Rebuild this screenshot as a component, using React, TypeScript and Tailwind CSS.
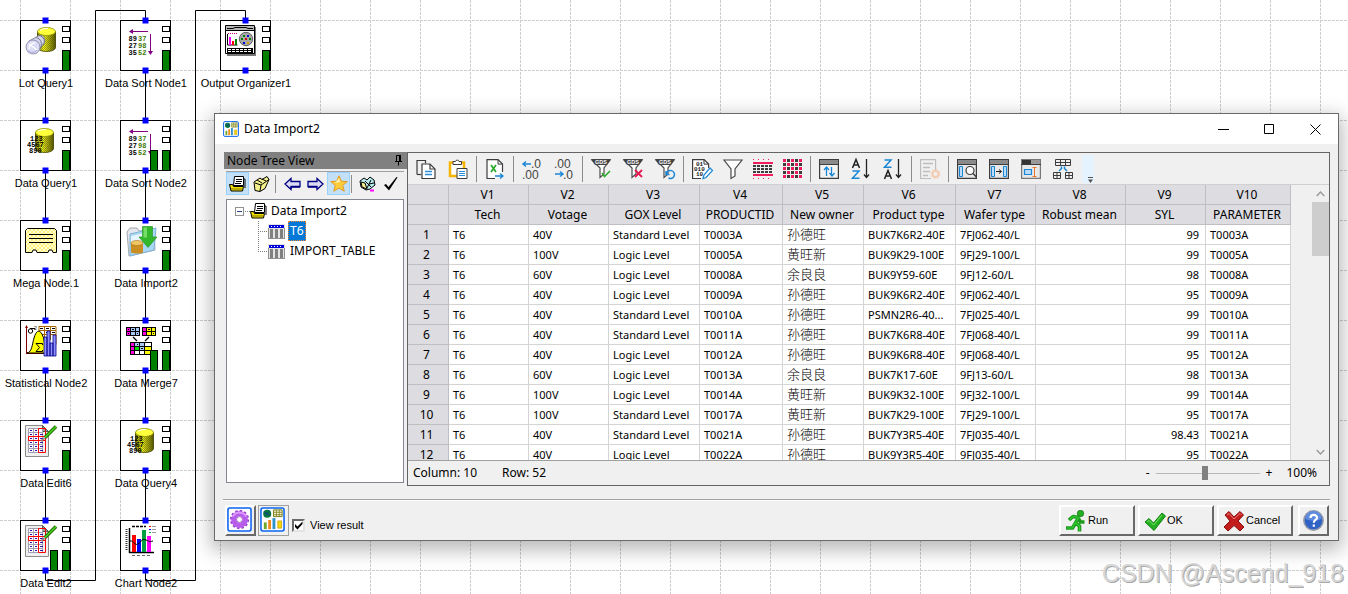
import React, { useState } from "react";

type ArtName =
  | "lot" | "query" | "mega" | "stat" | "edit" | "sort" | "import" | "merge" | "chart" | "output";

type FlowNode = { label: string; art: ArtName; col: number; row: number; bars: number };

const NODES: FlowNode[] = [
  { label: "Lot Query1", art: "lot", col: 0, row: 0, bars: 1 },
  { label: "Data Query1", art: "query", col: 0, row: 1, bars: 1 },
  { label: "Mega Node.1", art: "mega", col: 0, row: 2, bars: 1 },
  { label: "Statistical Node2", art: "stat", col: 0, row: 3, bars: 1 },
  { label: "Data Edit6", art: "edit", col: 0, row: 4, bars: 1 },
  { label: "Data Edit2", art: "edit", col: 0, row: 5, bars: 2 },
  { label: "Data Sort Node1", art: "sort", col: 1, row: 0, bars: 1 },
  { label: "Data Sort Node2", art: "sort", col: 1, row: 1, bars: 2 },
  { label: "Data Import2", art: "import", col: 1, row: 2, bars: 1 },
  { label: "Data Merge7", art: "merge", col: 1, row: 3, bars: 2 },
  { label: "Data Query4", art: "query", col: 1, row: 4, bars: 1 },
  { label: "Chart Node2", art: "chart", col: 1, row: 5, bars: 1 },
  { label: "Output Organizer1", art: "output", col: 2, row: 0, bars: 1 },
];

const COLUMNS = [
  { id: "V1", name: "Tech", w: "w-[80px]" },
  { id: "V2", name: "Votage", w: "w-[80px]" },
  { id: "V3", name: "GOX Level", w: "w-[91px]" },
  { id: "V4", name: "PRODUCTID", w: "w-[83px]" },
  { id: "V5", name: "New owner", w: "w-[81px]" },
  { id: "V6", name: "Product type", w: "w-[92px]" },
  { id: "V7", name: "Wafer type", w: "w-[80px]" },
  { id: "V8", name: "Robust mean", w: "w-[90px]" },
  { id: "V9", name: "SYL", w: "w-[80px]" },
  { id: "V10", name: "PARAMETER", w: "w-[85px]" },
];

const ROWS: string[][] = [
  ["T6", "40V", "Standard Level", "T0003A", "孙德旺", "BUK7K6R2-40E", "7FJ062-40/L", "", "99", "T0003A"],
  ["T6", "100V", "Logic Level", "T0005A", "黄旺新", "BUK9K29-100E", "9FJ29-100/L", "", "99", "T0005A"],
  ["T6", "60V", "Logic Level", "T0008A", "余良良", "BUK9Y59-60E", "9FJ12-60/L", "", "98", "T0008A"],
  ["T6", "40V", "Logic Level", "T0009A", "孙德旺", "BUK9K6R2-40E", "9FJ062-40/L", "", "95", "T0009A"],
  ["T6", "40V", "Standard Level", "T0010A", "孙德旺", "PSMN2R6-40...", "7FJ025-40/L", "", "99", "T0010A"],
  ["T6", "40V", "Standard Level", "T0011A", "孙德旺", "BUK7K6R8-40E", "7FJ068-40/L", "", "99", "T0011A"],
  ["T6", "40V", "Logic Level", "T0012A", "孙德旺", "BUK9K6R8-40E", "9FJ068-40/L", "", "95", "T0012A"],
  ["T6", "60V", "Logic Level", "T0013A", "余良良", "BUK7K17-60E", "9FJ13-60/L", "", "98", "T0013A"],
  ["T6", "100V", "Logic Level", "T0014A", "黄旺新", "BUK9K32-100E", "9FJ32-100/L", "", "99", "T0014A"],
  ["T6", "100V", "Standard Level", "T0017A", "黄旺新", "BUK7K29-100E", "7FJ29-100/L", "", "95", "T0017A"],
  ["T6", "40V", "Standard Level", "T0021A", "孙德旺", "BUK7Y3R5-40E", "7FJ035-40/L", "", "98.43", "T0021A"],
  ["T6", "40V", "Logic Level", "T0022A", "孙德旺", "BUK9Y3R5-40E", "9FJ035-40/L", "", "95", "T0022A"],
];

/* ---------- node artwork, drawn on a 32 x 32 field ---------- */

function Cylinder({ x, y }: { x: number; y: number }) {
  return (
    <g transform={`translate(${x} ${y})`}>
      <path d="M0.5 4.5v16c0 2.200 4 4 9 4s9-1.800 9-4v-16z" fill="url(#cyl)" stroke="#3d3d00" strokeWidth="0.800" />
      <path d="M0.5 4.5v16c0 2.200 4 4 9 4s9-1.800 9-4v-16z" fill="url(#hatch)" opacity="0.500" />
      <ellipse cx="9.500" cy="4.500" rx="9" ry="4" fill="#ffff3c" stroke="#8e8e00" strokeWidth="0.800" />
      <path d="M3 3.500c2-2 6-2 8-2" fill="none" stroke="#fff" />
    </g>
  );
}

const digits = { fontFamily: "Liberation Mono, monospace", fontSize: 7, fontWeight: 700 } as const;

function Art({ name }: { name: ArtName }) {
  switch (name) {
    case "lot":
      return (
        <g>
          <Cylinder x={12} y={2} />
          <path d="M4 16L14 10.500c5-1.500 8 5 4 9l-7 9z" fill="#d4d4ea" stroke="#77778f" strokeWidth="0.800" />
          <path d="M11 12.500c5 1 7 6 4 12M14 10.500c5 1 7 6 4 10" fill="none" stroke="#77778f" />
          <circle cx="8" cy="22" r="7" fill="#dcdcf6" stroke="#8080a0" strokeWidth="0.800" />
          <path d="M4 19l8 6M4 24c0-4 3-6 6-6" stroke="#fff" strokeWidth="1.500" fill="none" />
          <path d="M3 26c3 2 7 2 9-1" stroke="#a8a8d8" fill="none" />
        </g>
      );
    case "query":
      return (
        <g>
          <Cylinder x={10} y={3} />
          <g style={digits}>
            <text x="5" y="16">123</text>
            <text x="2" y="22">4567</text>
            <text x="4" y="28">890</text>
          </g>
        </g>
      );
    case "sort":
      return (
        <g>
          <path d="M8 6.500h15M25.500 9v18" stroke="#800080" fill="none" />
          <path d="M4 6.500l4-2.500v5zM25.500 30l-2.500-4h5z" fill="#800080" />
          <g style={digits}>
            <text x="3.500" y="16">89</text><text x="3.500" y="23">27</text><text x="3.500" y="30">35</text>
            <g fill="#3c7800">
              <text x="13" y="16">37</text><text x="13" y="23">98</text><text x="13" y="30">52</text>
            </g>
          </g>
        </g>
      );
    case "mega":
      return (
        <g>
          <path d="M0.500 5.500l2-2h27l2 2v22h-3.500l-1-2.500h-3l-1 2.500h-11l-1-2.500h-3l-1 2.500H.5z" fill="url(#dots)" stroke="#000" />
          <path d="M4 9.500h24M4 13.500h24M4 17.500h24" stroke="#000" />
        </g>
      );
    case "import":
      return (
        <g>
          <path d="M2 7l3-4h7l2 3 15-1 1 20-26 6z" fill="#e4e8ec" stroke="#a2a8ae" />
          <path d="M5 9l26-6-2 22-24 6z" fill="#a9d8f5" stroke="#7fb2d6" />
          <path d="M6 11l22-5-1 8-21 6z" fill="#e6f5ff" />
          <path d="M6 18v9c0 2 12 2 12 0v-9z" fill="#c98f24" />
          <ellipse cx="12" cy="18" rx="6" ry="2.500" fill="#f0c667" stroke="#a97412" strokeWidth="0.600" />
          <path d="M17.500 1.500h10V12h4.500l-9 10.500L14 12h3.500z" fill="#33b82b" stroke="#1b8f1b" strokeWidth="0.600" />
          <path d="M18.500 2.500H22v10h-3.500z" fill="#90ee80" opacity="0.700" />
        </g>
      );
    case "stat":
      return (
        <g>
          <path d="M14 1.500h17v18M14 5.500h17M14 9.500h17M19.500 1v14M25.500 1v14M14 1v10" stroke="#a86400" fill="none" />
          <path d="M15 3.500h3M21 3.500h3M27 3.500h3M21 7.500h3M27 7.500h3" stroke="#000" />
          <path d="M1.500 29V2M1 28.500h19" stroke="#800000" />
          <path d="M1.500 0l-1.500 3h3z" fill="#800000" />
          <path d="M2 28c5-1 5-8 7-15s5-9 8-4 2 11 5 19z" fill="#ffff00" stroke="#000" />
          <path d="M17.500 20v-1.500h-6.500l3.500 4-3.500 4h6.500V25" fill="none" stroke="#000" />
          <path d="M19 12h3v19h-3zM22 6h3v25h-3zM25 18h3v13h-3zM28 10h3v21h-3z" fill="#8f8fff" stroke="#00008b" strokeWidth="0.800" />
          <circle cx="5.500" cy="6" r="2.200" fill="none" stroke="#000" />
          <path d="M5 3.500h5" stroke="#000" />
          <text x="9" y="5" fontSize="5" fontFamily="Liberation Sans, sans-serif">2</text>
        </g>
      );
    case "merge":
      return (
        <g shapeRendering="crispEdges">
          <path d="M1 2h14v9H1zM17 2h14v9H17zM5 17h22v13H5z" fill="#000" />
          <path d="M2 3h3v3H2zM2 7h3v3H2zM18 3h3v3h-3zM18 7h3v3h-3zM6 18h3v3H6zM6 22h3v3H6zM6 26h3v3H6z" fill="#ff00e0" />
          <path d="M6 3h4v3H6zM11 3h3v3h-3zM6 7h4v3H6zM11 7h3v3h-3zM10 18h4v3h-4zM15 18h4v3h-4zM15 22h4v3h-4z" fill="#a6c8f5" />
          <path d="M22 3h4v3h-4zM27 3h3v3h-3zM22 7h4v3h-4zM27 7h3v3h-3zM20 22h6v3h-6zM20 26h6v3h-6z" fill="#ffff00" />
          <path d="M10 22h4v3h-4z" fill="#00e000" />
          <path d="M20 18h6v3h-6zM10 26h4v3h-4zM15 26h4v3h-4z" fill="#fff" />
          <path d="M3 4h1v1H3zM7 4h2v1H7zM12 8h1v1h-1zM3 8h1v1H3zM23 4h2v1h-2zM28 8h1v1h-1zM12 19h1v1h-1zM16 23h2v1h-2z" fill="#000" />
          <path d="M8 12l4 4M24 12l-4 4" stroke="#000" strokeWidth="1.300" shapeRendering="auto" />
        </g>
      );
    case "edit":
      return (
        <g>
          <path d="M0.500 0.500h17l6 6v25H.5z" fill="#efefef" stroke="#8b8b8b" />
          <path d="M17.500 0.500v6h6z" fill="#999" stroke="#555" />
          <path d="M3.500 3.500h14v24h-14zM3 7.500h15M3 11.500h15M3 15.500h15M3 19.500h15M3 23.500h15M8.500 3v24M13.500 3v24" fill="#fff" stroke="#a0a0b4" />
          <path d="M5 5.500h2M10 5.500h2M5 9.500h2M10 9.500h2M15 9.500h3M5 13.500h2M10 13.500h2M15 13.500h3M5 17.500h2M10 17.500h2M15 17.500h3M5 21.500h2M10 21.500h2M15 21.500h3M5 25.500h2M10 25.500h2M15 25.500h3" stroke="#3a10a8" />
          <path d="M3.500 11.500h17v4h-17zM13.500 3.500h7v24h-7z" fill="none" stroke="#ff0000" />
          <path d="M31 1.500L20 12.500" stroke="#1c6b00" strokeWidth="3.500" />
          <path d="M31 1.500L20 12.500" stroke="#4bd41c" strokeWidth="1.600" />
          <path d="M16 16l3.500-3" stroke="#888" strokeWidth="1.800" />
        </g>
      );
    case "chart":
      return (
        <g>
          <path d="M4.500 3v25M4 27.500h25" stroke="#000" strokeWidth="1.500" />
          <path d="M7 1.500h14" stroke="#000" strokeWidth="1.500" strokeDasharray="3 1" />
          <path d="M1.500 4v21" stroke="#333" strokeDasharray="1 1" strokeWidth="2" />
          <path d="M7 30.500h18" stroke="#666" strokeDasharray="3 2" />
          <path d="M7 10h4v17H7z" fill="#ff0000" />
          <path d="M12 14h4v13h-4z" fill="#0000ff" />
          <path d="M17 5h4v22h-4z" fill="#00a040" />
          <path d="M22 11h4v16h-4z" fill="#ff00ff" />
          <path d="M5 16c4-1 4 5 8 3s3-6 8-4 3 2 7 1" fill="none" stroke="#000" />
          <path d="M24 1.500h2" stroke="#f00" /><path d="M24 4.500h2" stroke="#00f" /><path d="M24 7.500h2" stroke="#0a4" />
          <path d="M27 1.500h4M27 4.500h4M27 7.500h4" stroke="#999" />
        </g>
      );
    case "output":
      return (
        <g>
          <path d="M2 2h29v29H2z" fill="#777" />
          <path d="M0.500 0.500h29v28H.5z" fill="#fff" stroke="#000" />
          <path d="M1 1h28v4H1z" fill="#b8b8b8" />
          <path d="M2 3.500h6l2-1h11l2 1h5" stroke="#000" fill="none" />
          <path d="M1 5.500h28" stroke="#000" />
          <path d="M2.500 9v11h10" fill="none" stroke="#000" />
          <path d="M4 12h2v8H4z" fill="#ff00ff" /><path d="M7 16h2v4H7z" fill="#ff0000" /><path d="M10 14h2v6h-2z" fill="#008000" />
          <path d="M3 8.500h9" stroke="#c00080" strokeDasharray="1 1" />
          <circle cx="21" cy="14" r="6.700" fill="#a8a8a8" stroke="#444" strokeWidth="0.800" />
          <path d="M18 10h2v2h-2z" fill="#008000" /><path d="M22 10h2v2h-2z" fill="#0000d0" /><path d="M16 13h2v2h-2z" fill="#008000" />
          <path d="M20 13h2v2h-2z" fill="#d00000" /><path d="M24 13h2v2h-2z" fill="#008000" /><path d="M18 17h2v2h-2z" fill="#0000d0" /><path d="M22 17h2v2h-2z" fill="#d0a000" />
          <path d="M2 23h26v5H2z" fill="#000" />
          <path d="M3 24.500h24M3 26.500h24" stroke="#fff" strokeDasharray="3 1" />
        </g>
      );
  }
}

function NodeCard({ node }: { node: FlowNode }) {
  return (
    <figure
      className="absolute flex w-[102px] flex-col items-center"
      style={{ left: node.col * 100 - 5, top: node.row * 100 + 17 }}
    >
      <svg width="52" height="57" viewBox="0 -3 52 57" aria-hidden="true">
        <rect x="0.500" y="0.500" width="50" height="50" fill="#fff" stroke="#000" shapeRendering="crispEdges" />
        <g transform="translate(5 5)"><Art name={node.art} /></g>
        <g shapeRendering="crispEdges" stroke="#000">
          <path d="M42.500 6.500h7v5h-7zM42.500 17.500h7v5h-7z" fill="#fff" />
          <path d="M42.500 30.500h7v20h-7z" fill="#008000" />
          {node.bars > 1 && <path d="M30.500 30.500h7v20h-7z" fill="#008000" />}
        </g>
        <path d="M22.500 -2.500h6v6h-6zM22.500 47.500h6v6h-6z" fill="#0000ff" />
      </svg>
      <figcaption className="mt-[2px] whitespace-nowrap text-[11px] leading-[14px]">{node.label}</figcaption>
    </figure>
  );
}

/* ---------- small shared icons ---------- */

function ReportIcon({ size }: { size: number }) {
  return (
    <svg width={size} height={size} viewBox="0 0 26 26" aria-hidden="true">
      <rect x="1" y="1" width="24" height="24" rx="2" fill="#fff" stroke="#0a64f0" strokeWidth="1.600" />
      <circle cx="7.500" cy="7" r="4.200" fill="#087a3a" />
      <path d="M4 5l7 4M5 9l5-5" stroke="#123c8c" />
      <path d="M14 3h9v7h-9z" fill="#f4f4d8" stroke="#777a10" />
      <path d="M14 5.500h9M14 8h9M17 3v7M20 3v7" stroke="#777a10" strokeWidth="0.800" />
      <path d="M4 16h3v7H4z" fill="#6ea82c" /><path d="M8.500 13.500h3V23h-3z" fill="#f08a1c" />
      <path d="M13 11.500h3V23h-3z" fill="#2b93c8" /><path d="M18.500 14.500h4V22h-4z" fill="#f6d800" stroke="#b88f00" strokeWidth="0.700" />
    </svg>
  );
}

function GearIcon() {
  return (
    <svg width="25" height="25" viewBox="0 0 26 26" aria-hidden="true">
      <rect x="1" y="1" width="24" height="24" rx="2" fill="#fff" stroke="#0a64f0" strokeWidth="1.600" />
      <circle cx="13" cy="13" r="8.800" fill="none" stroke="#9a42cc" strokeWidth="2.500" strokeDasharray="2.500 2.100" />
      <circle cx="13" cy="13" r="6" fill="none" stroke="#b85cec" strokeWidth="5.500" />
      <path d="M6 10a8 8 0 0 1 14 0" fill="none" stroke="#dc9cff" strokeWidth="2" />
      <circle cx="13" cy="13" r="3" fill="#fff" stroke="#7c2ea6" strokeWidth="0.700" />
    </svg>
  );
}

function FolderDoc() {
  return (
    <svg width="17" height="16" viewBox="0 0 17 16" aria-hidden="true">
      <path d="M5.500 0.500h9v9h-10z" fill="#fff" stroke="#000" />
      <path d="M7 3.500h6M7 5.500h6M6 7.500h6" stroke="#000" />
      <path d="M14.500 3h1.500v9" stroke="#000" fill="none" />
      <path d="M0.500 8.500h3l1 2h10l-1 4.500H2z" fill="#f0e000" stroke="#000" />
      <path d="M2 13h11" stroke="#807800" />
    </svg>
  );
}

function TableGlyph() {
  return (
    <svg width="17" height="15" viewBox="0 0 17 15" shapeRendering="crispEdges" aria-hidden="true">
      <path d="M0 0h17v15H0z" fill="#e4e4e4" />
      <path d="M1 1h15v3H1z" fill="#0000d8" />
      <path d="M3 2h1v1H3zM6 2h1v1H6zM9 2h1v1H9zM12 2h1v1h-1z" fill="#fff" />
      <path d="M2 5h3v9H2zM7 5h3v9H7zM12 5h3v9h-3z" fill="#808080" />
      <path d="M0 4h1v11H0zM16 4h1v11h-1zM0 14h17v1H0z" fill="#909090" />
    </svg>
  );
}

/* ---------- toolbar icons, drawn on a 20 x 20 field ---------- */

const tool = {
  copy: (
    <g>
      <path d="M1 15.500V1.500h8.500v3" fill="none" stroke="#3c3c3c" strokeWidth="1.200" /><path d="M1 15.500h4" stroke="#3c3c3c" strokeWidth="1.200" />
      <path d="M6 5h8l5 5v9.500H6z" fill="#fff" stroke="#3c3c3c" strokeWidth="1.200" /><path d="M14 5v5h5" fill="none" stroke="#3c3c3c" strokeWidth="1.200" />
      <path d="M9 12.500h7M9 15.500h7" stroke="#2d8fdb" strokeWidth="1.500" />
    </g>
  ),
  paste: (
    <g>
      <path d="M2 3.500h14V17H2z" fill="#fff" stroke="#f5b400" strokeWidth="2.500" />
      <path d="M5 5.500V2.500h2.500a1.800 1.800 0 0 1 3.500 0H13.500v3z" fill="#fff" stroke="#3c3c3c" />
      <path d="M9 9.500h10v10H9z" fill="#fff" stroke="#3c3c3c" /><path d="M11 12.500h6M11 14.500h6M11 16.500h6" stroke="#2d8fdb" />
    </g>
  ),
  excel: (
    <g>
      <path d="M10 19.500H2V.6h11l4.500 4.500V13" fill="#fff" stroke="#3c3c3c" strokeWidth="1.200" /><path d="M13 .6v4.500h4.500" fill="none" stroke="#3c3c3c" />
      <path d="M6 6l5 7M11 6l-5 7" stroke="#2eab2e" strokeWidth="1.800" /><path d="M10 17h8M15 14.500l3 2.500-3 2.500" fill="none" stroke="#1a86d6" strokeWidth="1.300" />
    </g>
  ),
  decLess: (
    <g fontFamily="Liberation Sans, sans-serif" fontSize="12" fill="#444">
      <text x="9" y="9">.0</text><text x="0" y="20">.00</text>
      <path d="M1 5h8M4 2.500L1 5l3 2.500" fill="none" stroke="#1a86d6" strokeWidth="1.400" />
    </g>
  ),
  decMore: (
    <g fontFamily="Liberation Sans, sans-serif" fontSize="12" fill="#444">
      <text x="0" y="9">.00</text><text x="9" y="20">.0</text>
      <path d="M1 15h8M6 12.500L9 15l-3 2.500" fill="none" stroke="#1a86d6" strokeWidth="1.400" />
    </g>
  ),
  funnel: <path d="M1 1h18l-7 9v7l-4 2.500V10z" fill="#fff" stroke="#4a4a4a" strokeWidth="1.200" />,
  rows: (
    <g shapeRendering="crispEdges">
      <path d="M0 4h20M0 16h20" stroke="#f01c5c" strokeWidth="2" />
      <path d="M0 .5h20M0 19.500h20" stroke="#f01c5c" strokeDasharray="1 4" />
      <path d="M0 7h20M0 10h20M0 13h20" stroke="#3c3c3c" strokeWidth="2" strokeDasharray="3 1" />
    </g>
  ),
  grid: (
    <g shapeRendering="crispEdges" strokeWidth="3" strokeDasharray="3 1">
      <path d="M0 1.500h20M0 5.500h20M0 9.500h20M0 13.500h20M0 17.500h20" stroke="#f01c5c" />
      <path d="M4 1.500h3M12 1.500h3M0 5.500h3M8 5.500h3M16 5.500h3M4 9.500h3M12 9.500h3M0 13.500h3M8 13.500h3M16 13.500h3M4 17.500h3M12 17.500h3" stroke="#3c3c3c" strokeDasharray="none" />
    </g>
  ),
  binary: (
    <g>
      <path d="M9 19.500H.6V.6h11.500l4.500 4.500V9" fill="#fff" stroke="#3c3c3c" strokeWidth="1.200" /><path d="M12 .6v4.500h4.500" fill="none" stroke="#3c3c3c" />
      <g fontFamily="Liberation Mono, monospace" fontWeight="700" fontSize="6" fill="#222"><text x="4" y="7">01</text><text x="2" y="12">010</text><text x="4" y="17">10</text></g>
      <path d="M11 19.500l1-3.500 6-7 2.500 2.500-6.500 7z" fill="#fff" stroke="#1a86d6" strokeWidth="1.200" />
    </g>
  ),
  sortTable: (
    <g>
      <path d="M.6.600h18.800v18.800H.6z" fill="#f4f4f4" stroke="#3c3c3c" strokeWidth="1.200" /><path d="M1 1h18v4H1z" fill="#8a8a8a" /><path d="M1 5.500h18" stroke="#3c3c3c" />
      <path d="M7.500 17V8.500M5 11l2.500-3 2.500 3M12.500 8v8.500M10.500 14l2.500 3 2.500-3" fill="none" stroke="#1a86d6" strokeWidth="1.300" />
    </g>
  ),
  az: (
    <g fill="none" strokeWidth="1.500">
      <path d="M1.500 9L5 .5 8.500 9M2.700 6h4.600" stroke="#222" /><path d="M1.500 12h6.500l-6.500 7.300h7" stroke="#1a86d6" />
      <path d="M15.500 0v18M13 15.500l2.500 3 2.500-3" stroke="#222" strokeWidth="1.300" />
    </g>
  ),
  za: (
    <g fill="none" strokeWidth="1.500">
      <path d="M1.500 1h6.500l-6.500 7.300h7" stroke="#1a86d6" /><path d="M1.500 20L5 11.500 8.500 20M2.700 17h4.600" stroke="#222" />
      <path d="M15.500 0v18M13 15.500l2.500 3 2.500-3" stroke="#222" strokeWidth="1.300" />
    </g>
  ),
  listGear: (
    <g>
      <path d="M11 19.500H.6V.6h15V11" fill="none" stroke="#bdbdbd" strokeWidth="1.200" /><path d="M3 4.500h10M3 8.500h7M3 12.500h7M3 16.500h5" stroke="#bdbdbd" strokeWidth="1.400" />
      <circle cx="15.500" cy="15" r="3" fill="none" stroke="#f3cdb2" strokeWidth="2" /><circle cx="15.500" cy="15" r="4.500" fill="none" stroke="#f3cdb2" strokeDasharray="1.800 1.700" />
    </g>
  ),
  find: (
    <g>
      <path d="M.6.600h18.800v18.800H.6z" fill="#e8e8e8" stroke="#3c3c3c" strokeWidth="1.200" /><path d="M1 1h18v4H1z" fill="#8a8a8a" /><path d="M1 5.500h18" stroke="#3c3c3c" />
      <path d="M2.500 7.500h3v10h-3z" fill="#b9ddf8" stroke="#1a86d6" /><circle cx="13" cy="11.500" r="4" fill="#fff" stroke="#3c3c3c" strokeWidth="1.200" /><path d="M16 14.500l3.500 3.500" stroke="#3c3c3c" strokeWidth="1.500" />
    </g>
  ),
  fit: (
    <g>
      <path d="M.6.600h18.800v18.800H.6z" fill="#e8e8e8" stroke="#3c3c3c" strokeWidth="1.200" /><path d="M1 1h18v4H1z" fill="#8a8a8a" /><path d="M1 5.500h18" stroke="#3c3c3c" />
      <path d="M2.500 7.500h3v10h-3zM14.500 7.500h3v10h-3z" fill="#b9ddf8" stroke="#1a86d6" /><path d="M7 12.500h5.500M10 10.500l2.500 2-2.500 2" fill="none" stroke="#222" />
    </g>
  ),
  cell: (
    <g>
      <path d="M.6.600h18.800v18.800H.6z" fill="#e8e8e8" stroke="#777" strokeWidth="1.200" /><path d="M1 1h9v4H1z" fill="#333" /><path d="M10 1h9v4h-9z" fill="#999" /><path d="M0 5.500h20" stroke="#3c3c3c" />
      <path d="M3.500 10.500h7v5h-7z" fill="#b9ddf8" stroke="#1a86d6" strokeWidth="1.200" /><path d="M11.500 8.500h4M11.500 17.500h4M13.500 8.500v9" stroke="#e8762c" />
    </g>
  ),
  split: (
    <g fill="none" stroke="#3c3c3c">
      <path d="M2.500 .5h15v6h-15zM2.500 3.500h15M7.500.500v6M12.500.500v6M.5 13.500h7v6h-7zM.5 16.500h7M4 13.500v6M12.500 13.500h7v6h-7zM12.500 16.500h7M16 13.500v6" />
      <path d="M8.500 7.500v2L6 12M11.500 7.500v2L14 12" stroke="#1a86d6" strokeWidth="1.500" />
    </g>
  ),
};

const gds = (mark: React.ReactNode) => (
  <g>
    <path d="M1 1h18l-6 8v6l-4 3.500V9z" fill="#fff" stroke="#4a4a4a" strokeWidth="1.200" />
    <path d="M0 0h20l-4 6H4z" fill="#444" />
    <text x="4" y="5" fontSize="5.500" fontWeight="700" fontFamily="Liberation Sans, sans-serif" fill="#fff">GDS</text>
    {mark}
  </g>
);
const gdsCheck = gds(<path d="M11 14l2.500 3.500L19 12" fill="none" stroke="#2eab2e" strokeWidth="1.600" />);
const gdsCross = gds(<path d="M12 11l7 7M19 11l-7 7" stroke="#e8184f" strokeWidth="1.800" />);
const gdsRedo = gds(<path d="M11 12v3.500h3.500M11.500 15a4 4 0 1 1 2 4" fill="none" stroke="#1a86d6" strokeWidth="1.500" />);

function ToolButton({ label, narrow, children }: { label: string; narrow?: boolean; children: React.ReactNode }) {
  return (
    <button type="button" aria-label={label} className={`flex h-[28px] shrink-0 items-center justify-center hover:bg-[#e5f3ff] ${narrow ? "w-[30px]" : "w-[32px]"}`}>
      <svg width="20" height="20" viewBox="0 0 20 20" className="overflow-visible">{children}</svg>
    </button>
  );
}

const ToolSep = () => <span className="mx-[2px] h-[26px] w-px shrink-0 bg-[#8c8c8c]" />;

function TreeToolbar() {
  return (
    <div className="flex h-[24px] items-center gap-px border-t border-[#a0a0a0]">
      <button type="button" aria-label="Open nodes" className="flex size-[23px] items-center justify-center border border-[#99d1ff] bg-[#c4e0f7]"><FolderDoc /></button>
      <button type="button" aria-label="Closed nodes" className="flex size-[22px] items-center justify-center">
        <svg width="17" height="16" viewBox="0 0 17 16"><path d="M1 6l6-4 2 1.500L14 .5l2 3-4 9-5 3-5-1z" fill="#f4f08c" stroke="#000" /><path d="M2 7l6 2 8-5.500M8 9l-1 6M4 4l5 3M9 3l4 2" fill="none" stroke="#000" /></svg>
      </button>
      <span className="mx-[2px] h-[18px] w-px bg-[#8c8c8c]" />
      <button type="button" aria-label="Back" className="ml-[2px] flex size-[22px] items-center justify-center">
        <svg width="17" height="14" viewBox="0 0 17 14"><path d="M1 7l6-5.500v3h9v5H7v3z" fill="#dcdcf4" stroke="#000080" strokeWidth="1.300" /><path d="M8 10h8M7 12V10" stroke="#000080" strokeWidth="1.500" /></svg>
      </button>
      <button type="button" aria-label="Forward" className="flex size-[22px] items-center justify-center">
        <svg width="17" height="14" viewBox="0 0 17 14"><path d="M16 7l-6-5.500v3H1v5h9v3z" fill="#dcdcf4" stroke="#000080" strokeWidth="1.300" /><path d="M1 10h9" stroke="#000080" strokeWidth="1.500" /></svg>
      </button>
      <button type="button" aria-label="Favourite" className="flex size-[23px] items-center justify-center border border-[#99d1ff] bg-[#c4e0f7]">
        <svg width="18" height="17" viewBox="0 0 18 17"><path d="M9 .8l2.300 5.400 6 .4-4.600 3.800 1.600 5.800L9 13l-5.200 3.200 1.500-5.800L.8 6.600l5.900-.4z" fill="#ffcd3c" stroke="#e09a20" /><path d="M9 3l1 4-5 1z" fill="#fff3b0" /></svg>
      </button>
      <span className="mr-[4px] h-[18px] w-px bg-[#8c8c8c]" />
      <button type="button" aria-label="Refresh tree" className="flex size-[22px] items-center justify-center">
        <svg width="18" height="16" viewBox="0 0 18 16"><path d="M1 5l4-3 3 2 3-3 4 3 1 5-5 4-4 1-5-3z" fill="#b8ecec" stroke="#000" /><path d="M2 6l4 1 2 6-5-2z" fill="#f4f08c" stroke="#000" /><path d="M6 5l6 6M12 4l-4 8M10 8l5-1" stroke="#000" /><path d="M11 14.500h4" stroke="#ff00ff" strokeWidth="2" /></svg>
      </button>
      <button type="button" aria-label="Apply" className="flex size-[22px] items-center justify-center">
        <svg width="14" height="14" viewBox="0 0 14 14"><path d="M0 8l2-1 2.500 3L12.500 0 13.500.5 5 13.500z" fill="#000" /></svg>
      </button>
    </div>
  );
}

function TreePane() {
  return (
    <section className="flex w-[183px] shrink-0 flex-col pb-[3px]">
      <header className="flex h-[17px] items-center justify-between bg-[#808080] pl-[3px]">
        <h2 className="text-[12px] leading-[16px]">Node Tree View</h2>
        <svg width="13" height="11" viewBox="0 0 13 11" aria-hidden="true"><path d="M2.500 6V.5h4V6M1 6.500h7M4.500 7v3.500" fill="none" stroke="#000" /><path d="M5 0h2v6H5z" /></svg>
      </header>
      <div className="mt-[2px] flex flex-1 flex-col pl-[2px] pr-[3px]">
        <TreeToolbar />
        <ul className="mt-[4px] flex-1 border border-[#828790] bg-white py-px text-[12px] leading-[20px]">
          <li>
            <div className="flex h-[20px] items-center pl-[8px]">
              <svg width="15" height="9" viewBox="0 0 15 9" shapeRendering="crispEdges" aria-hidden="true"><path d="M.5.500h8v8h-8z" fill="#fff" stroke="#919191" /><path d="M2 4.500h5" stroke="#2a3f8f" /><path d="M10 4.500h5" stroke="#808080" strokeDasharray="1 1" /></svg>
              <FolderDoc />
              <span className="ml-[4px]">Data Import2</span>
            </div>
            <ul>
              <li className="flex h-[20px] items-center pl-[31px]">
                <svg width="10" height="20" viewBox="0 0 10 20" shapeRendering="crispEdges" aria-hidden="true"><path d="M.5 0v20M0 10.500h10" stroke="#808080" strokeDasharray="1 1" /></svg>
                <TableGlyph />
                <span className="ml-[3px] border border-dotted border-[#ff8728] bg-[#0078d7] px-px leading-[18px] text-white">T6</span>
              </li>
              <li className="flex h-[20px] items-center pl-[31px]">
                <svg width="10" height="20" viewBox="0 0 10 20" shapeRendering="crispEdges" aria-hidden="true"><path d="M.5 0v11M0 10.500h10" stroke="#808080" strokeDasharray="1 1" /></svg>
                <TableGlyph />
                <span className="ml-[5px]">IMPORT_TABLE</span>
              </li>
            </ul>
          </li>
        </ul>
      </div>
    </section>
  );
}

function DataGrid() {
  return (
    <div className="flex h-[276px] min-w-0 overflow-hidden border-t border-[#d0d0d0]">
      <div className="min-w-0 flex-1 overflow-hidden">
        <table className="w-[883px] table-fixed border-separate border-spacing-0 text-[12px] leading-[19px]">
          <colgroup>
            <col className="w-[41px]" />
            {COLUMNS.map((c) => <col key={c.id} className={c.w} />)}
          </colgroup>
          <thead className="bg-[#dcdce1]">
            <tr>
              <th className="h-[20px] border-b border-r border-[#bebec3] p-0" />
              {COLUMNS.map((c) => <th key={c.id} scope="col" className="h-[20px] border-b border-r border-[#bebec3] p-0 pr-[2px] font-normal">{c.id}</th>)}
            </tr>
            <tr>
              <th className="h-[20px] border-b border-r border-[#bebec3] p-0" />
              {COLUMNS.map((c) => <th key={c.id} scope="col" className="h-[20px] whitespace-nowrap border-b border-r border-[#bebec3] p-0 pr-[2px] font-normal">{c.name}</th>)}
            </tr>
          </thead>
          <tbody>
            {ROWS.map((r, i) => (
              <tr key={i}>
                <th scope="row" className="h-[20px] border-b border-r border-[#bebec3] bg-[#dcdce1] p-0 pr-[3px] font-normal">{i + 1}</th>
                {r.map((v, j) => (
                  <td
                    key={j}
                    className={`h-[20px] overflow-hidden whitespace-nowrap border-b border-r border-[#d4d4d4] bg-white py-0 ${j === 8 ? "pr-[6px] text-right text-[11px]" : j === 4 ? "pl-[4px] text-[13px] font-light" : "pl-[4px] text-[11px]"}`}
                  >
                    {v}
                  </td>
                ))}
              </tr>
            ))}
          </tbody>
        </table>
      </div>
      <div className="flex w-[17px] shrink-0 flex-col items-center bg-[#f0f0f0]">
        <button type="button" aria-label="Scroll up" className="flex h-[17px] w-full items-center justify-center">
          <svg width="9" height="6" viewBox="0 0 9 6"><path d="M.7 5L4.500 1l3.800 4" fill="none" stroke="#9a9a9a" strokeWidth="1.400" /></svg>
        </button>
        <div className="h-[54px] w-full bg-[#cdcdcd]" />
        <button type="button" aria-label="Scroll down" className="mt-auto flex h-[17px] w-full items-center justify-center">
          <svg width="9" height="6" viewBox="0 0 9 6"><path d="M.7 1l3.800 4 3.800-4" fill="none" stroke="#9a9a9a" strokeWidth="1.400" /></svg>
        </button>
      </div>
    </div>
  );
}

function GridPane() {
  return (
    <section className="flex min-w-0 flex-1 flex-col border border-[#646464]">
      <div className="flex h-[31px] items-center overflow-hidden pl-[2px]">
        <ToolButton label="Copy">{tool.copy}</ToolButton>
        <ToolButton label="Paste">{tool.paste}</ToolButton>
        <ToolSep />
        <ToolButton label="Export to Excel">{tool.excel}</ToolButton>
        <ToolSep />
        <ToolButton label="Increase decimals">{tool.decLess}</ToolButton>
        <ToolButton label="Decrease decimals">{tool.decMore}</ToolButton>
        <ToolSep />
        <ToolButton label="Apply GDS filter">{gdsCheck}</ToolButton>
        <ToolButton label="Remove GDS filter">{gdsCross}</ToolButton>
        <ToolButton label="Reset GDS filter">{gdsRedo}</ToolButton>
        <ToolSep />
        <ToolButton label="Edit values">{tool.binary}</ToolButton>
        <ToolButton label="Filter" narrow>{tool.funnel}</ToolButton>
        <ToolButton label="Highlight rows" narrow>{tool.rows}</ToolButton>
        <ToolButton label="Highlight cells" narrow>{tool.grid}</ToolButton>
        <ToolSep />
        <ToolButton label="Sort table">{tool.sortTable}</ToolButton>
        <ToolButton label="Sort ascending">{tool.az}</ToolButton>
        <ToolButton label="Sort descending">{tool.za}</ToolButton>
        <ToolSep />
        <ToolButton label="List options">{tool.listGear}</ToolButton>
        <ToolSep />
        <ToolButton label="Find column">{tool.find}</ToolButton>
        <ToolButton label="Fit columns">{tool.fit}</ToolButton>
        <ToolButton label="Cell size">{tool.cell}</ToolButton>
        <ToolButton label="Split table">{tool.split}</ToolButton>
        <button type="button" aria-label="More tools" className="ml-[3px] flex h-[28px] w-[12px] shrink-0 items-end justify-end bg-[#e5f3ff]">
          <svg width="7" height="6" viewBox="0 0 7 6"><path d="M1 .5h5" stroke="#555" /><path d="M1 2.500h5L3.500 6z" fill="#555" /></svg>
        </button>
      </div>
      <DataGrid />
      <footer className="flex h-[25px] items-center border-t border-[#a0a0a0] pl-[5px] pr-[12px] text-[12px]">
        <span>Column: 10</span>
        <span className="ml-[25px]">Row: 52</span>
        <span className="ml-auto">-</span>
        <input
          type="range"
          aria-label="Zoom"
          min={0}
          max={100}
          defaultValue={47}
          className="mx-[6px] h-[14px] w-[104px] appearance-none bg-transparent [&::-webkit-slider-runnable-track]:h-px [&::-webkit-slider-runnable-track]:bg-[#b8b8b8] [&::-webkit-slider-thumb]:-mt-[7px] [&::-webkit-slider-thumb]:h-[14px] [&::-webkit-slider-thumb]:w-[6px] [&::-webkit-slider-thumb]:appearance-none [&::-webkit-slider-thumb]:bg-[#808080]"
        />
        <span>+</span>
        <span className="ml-[14px]">100%</span>
      </footer>
    </section>
  );
}

function PushButton({ label, children }: { label: string; children: React.ReactNode }) {
  return (
    <button type="button" className="flex h-[31px] w-[76px] items-center gap-px border-2 border-b-[#696969] border-l-white border-r-[#696969] border-t-white bg-[#f0f0f0] pl-[4px] text-[11px]">
      <svg width="22" height="22" viewBox="0 0 22 22" className="shrink-0" aria-hidden="true">{children}</svg>
      <span>{label}</span>
    </button>
  );
}

function BottomBar() {
  const [view, setView] = useState(true);
  return (
    <div className="mt-[13px] flex h-[41px] items-start border-t border-[#a0a0a0] pl-[2px] pr-px pt-[5px] shadow-[inset_0_1px_0_#fff]">
      <button type="button" aria-label="Settings" className="flex size-[31px] items-start justify-start border-2 border-b-[#696969] border-l-white border-r-[#696969] border-t-white"><GearIcon /></button>
      <button type="button" aria-label="Report" className="ml-[2px] flex size-[31px] items-start justify-start border border-[#a0a0a0] pl-px pt-px"><ReportIcon size={25} /></button>
      <label className="ml-[3px] flex items-center gap-[5px] pt-[11px] text-[11px] leading-[18px]">
        <span className="relative flex size-[13px]">
          <input type="checkbox" checked={view} onChange={(e) => setView(e.target.checked)} className="size-[13px] appearance-none border-2 border-b-[#e3e3e3] border-l-[#696969] border-r-[#e3e3e3] border-t-[#696969] bg-white" />
          {view && <svg width="13" height="13" viewBox="0 0 13 13" className="pointer-events-none absolute inset-0"><path d="M3 5v3l2.500 2.500L10.500 5V2.500L5.500 7.500z" fill="#000" /></svg>}
        </span>
        View result
      </label>
      <div className="ml-auto flex gap-[3px]">
        <PushButton label="Run">
          <g fill="none" stroke="#1d9a1d" strokeWidth="3.600" strokeLinejoin="round"><path d="M14 7l-3.500 6 4 3v5.500M10.500 13L7.500 18H1M14 7.500L8 6.500 4 10M13 8l2.500 4h4" /></g>
          <g fill="none" stroke="#2fce2f" strokeWidth="1.200"><path d="M14 7l-3.500 6 4 3v5M10 13L7.500 18H2M14 7.500L8 6.500 5 9.500" /></g>
          <circle cx="15.500" cy="3.500" r="3.200" fill="#22b022" stroke="#0e6b0e" strokeWidth="0.700" />
        </PushButton>
        <PushButton label="OK">
          <path d="M1 12l4-3.500 4.500 4.500L18 3l3.500 3L10 20.500z" fill="#22b022" stroke="#128012" />
          <path d="M3 12l2-1.500L9.500 15 18 5" fill="none" stroke="#7be36b" />
        </PushButton>
        <PushButton label="Cancel">
          <path d="M2 5l4-3.500 5 5.500 6-5.500L20.500 5l-5.500 6 6 6-4 4-6-5.500L5 21l-4-4 6-6z" fill="#c21c1c" stroke="#8a0f0f" />
          <path d="M4 5l2-1.500 5 5.500 6-5.500 1.500 1.500" fill="none" stroke="#ee7c7c" />
        </PushButton>
        <button type="button" aria-label="Help" className="ml-[2px] flex size-[31px] items-center justify-center border-2 border-b-[#696969] border-l-white border-r-[#696969] border-t-white">
          <svg width="21" height="21" viewBox="0 0 21 21"><circle cx="10.500" cy="10.500" r="9.600" fill="#2f62c4" stroke="#8f97a8" strokeWidth="1.600" /><path d="M2.500 9a8 8 0 0 1 16 0c-5 2-11 2-16 0z" fill="#5f8ce0" /><path d="M7.500 8c0-4 6.500-4 6.500-.3 0 2.300-3.200 2.300-3.200 5M10.800 14.500v2.200" fill="none" stroke="#fff" strokeWidth="2.200" /></svg>
        </button>
      </div>
    </div>
  );
}

function ImportWindow() {
  return (
    <main role="dialog" aria-label="Data Import2" className="absolute left-[214px] right-[9px] top-[113px] min-w-[700px] border border-[#6a6a6a] bg-[#f0f0f0] font-['Noto_Sans','Noto_Sans_CJK_SC',sans-serif] shadow-[0_6px_18px_3px_rgba(0,0,0,0.28)]">
      <header className="flex h-[30px] items-center bg-white pl-[8px]">
        <ReportIcon size={16} />
        <h1 className="ml-[5px] text-[12px]">Data Import2</h1>
        <div className="ml-auto flex">
          <button type="button" aria-label="Minimize" className="flex h-[30px] w-[46px] items-center justify-center"><svg width="11" height="11" viewBox="0 0 11 11"><path d="M0 5.500h11" stroke="#000" /></svg></button>
          <button type="button" aria-label="Maximize" className="flex h-[30px] w-[46px] items-center justify-center"><svg width="11" height="11" viewBox="0 0 11 11"><path d="M.5.500h9v9h-9z" fill="none" stroke="#000" /></svg></button>
          <button type="button" aria-label="Close" className="flex h-[30px] w-[46px] items-center justify-center"><svg width="11" height="11" viewBox="0 0 11 11"><path d="M.5.500l10 10M10.500.500l-10 10" stroke="#000" /></svg></button>
        </div>
      </header>
      <div className="px-[8px] pt-[8px]">
        <div className="flex pl-px">
          <TreePane />
          <GridPane />
        </div>
        <div className="font-['Liberation_Sans',sans-serif]">
          <BottomBar />
        </div>
      </div>
    </main>
  );
}

export default function App() {
  return (
    <div className="relative min-h-screen overflow-hidden bg-white font-['Liberation_Sans',sans-serif] text-black">
      <svg className="absolute inset-0 h-full w-full" aria-hidden="true">
        <defs>
          <pattern id="mesh" width="100" height="100" patternUnits="userSpaceOnUse">
            <path d="M20.500 0v100M70.500 0v100M0 20.500h100M0 70.500h100" stroke="#cdcdcd" strokeDasharray="3 1" />
          </pattern>
          <pattern id="dots" width="4" height="4" patternUnits="userSpaceOnUse">
            <path d="M0 0h4v4H0z" fill="#ffffd0" /><path d="M0 0h2v2H0zM2 2h2v2H2z" fill="#ffee80" />
          </pattern>
          <pattern id="hatch" width="2" height="2" patternUnits="userSpaceOnUse">
            <path d="M0 0h1v1H0zM1 1h1v1H1z" fill="#4a4a00" />
          </pattern>
          <linearGradient id="cyl"><stop offset="0" stopColor="#8a8a00" /><stop offset="0.350" stopColor="#ffff20" /><stop offset="1" stopColor="#5a5a00" /></linearGradient>
        </defs>
        <rect width="100%" height="100%" fill="url(#mesh)" />
        <path d="M45.500 20V580.500H95.500V10.500H145.500V580.500H195.500V10.500H245.500V20" fill="none" stroke="#000" />
      </svg>
      {NODES.map((n) => <NodeCard key={n.label} node={n} />)}
      <ImportWindow />
      <p className="pointer-events-none absolute bottom-[7px] right-[4px] text-[25px] leading-[28px] text-[#d6d6d6] [text-shadow:1px_1px_0_#a8a8a8]">CSDN @Ascend_918</p>
    </div>
  );
}
